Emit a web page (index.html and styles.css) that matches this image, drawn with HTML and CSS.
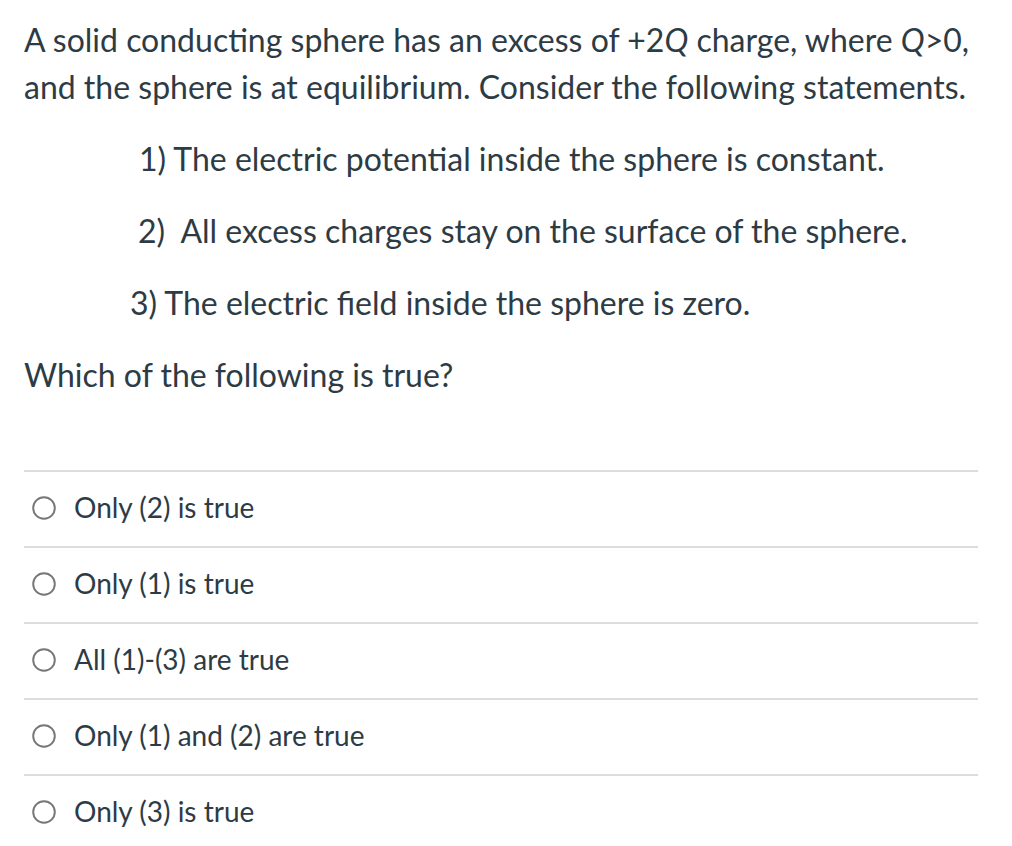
FILE: index.html
```html
<!DOCTYPE html>
<html>
<head>
<meta charset="utf-8">
<link rel="stylesheet" href="styles.css">
</head>
<body>
<div class="quiz">
  <div class="question">
    <p class="intro">A solid conducting sphere has an excess of +2<i>Q</i> charge, where <i>Q</i>&gt;0, and the sphere is at equilibrium. Consider the following statements.</p>
    <p class="stmt s1">1) The electric potential inside the sphere is constant.</p>
    <p class="stmt s2">2)&nbsp; All excess charges stay on the surface of the sphere.</p>
    <p class="stmt s3">3) The electric field inside the sphere is zero.</p>
    <p class="ask">Which of the following is true?</p>
  </div>
  <div class="answers">
    <label class="answer"><svg class="radio" width="20" height="20" viewBox="0 0 20 20"><circle cx="10" cy="10" r="9" fill="none" stroke="#777" stroke-width="1.6"/></svg><span class="label">Only (2) is true</span></label>
    <label class="answer"><svg class="radio" width="20" height="20" viewBox="0 0 20 20"><circle cx="10" cy="10" r="9" fill="none" stroke="#777" stroke-width="1.6"/></svg><span class="label">Only (1) is true</span></label>
    <label class="answer"><svg class="radio" width="20" height="20" viewBox="0 0 20 20"><circle cx="10" cy="10" r="9" fill="none" stroke="#777" stroke-width="1.6"/></svg><span class="label">All (1)-(3) are true</span></label>
    <label class="answer"><svg class="radio" width="20" height="20" viewBox="0 0 20 20"><circle cx="10" cy="10" r="9" fill="none" stroke="#777" stroke-width="1.6"/></svg><span class="label">Only (1) and (2) are true</span></label>
    <label class="answer"><svg class="radio" width="20" height="20" viewBox="0 0 20 20"><circle cx="10" cy="10" r="9" fill="none" stroke="#777" stroke-width="1.6"/></svg><span class="label">Only (3) is true</span></label>
  </div>
</div>
</body>
</html>
```

FILE: styles.css
```css
html, body {
  margin: 0;
  padding: 0;
  background: #ffffff;
}
body {
  font-family: Lato, "Noto Sans", sans-serif;
  color: #2d3b45;
}
.quiz {
  width: 954px;
  padding: 16px 0 0 24px;
}
.question p {
  margin: 0 0 25px 0;
  font-size: 32px;
  line-height: 47px;
}
.question i {
  font-style: italic;
}
.stmt.s1 { padding-left: 115px; }
.stmt.s2 { padding-left: 114px; }
.stmt.s3 { padding-left: 106px; }
.question .ask {
  margin-bottom: 0;
}
.answers {
  margin-top: 72px;
}
.answer {
  box-sizing: border-box;
  display: flex;
  align-items: center;
  height: 76px;
  border-top: 2px solid #dcdcdc;
  padding: 0 0 5px 10px;
}
.radio {
  display: block;
  width: 24px;
  height: 24px;
  min-width: 24px;
  flex: 0 0 24px;
  margin: 2px 18px 0 -2px;
}
.label {
  font-size: 28px;
}
```
